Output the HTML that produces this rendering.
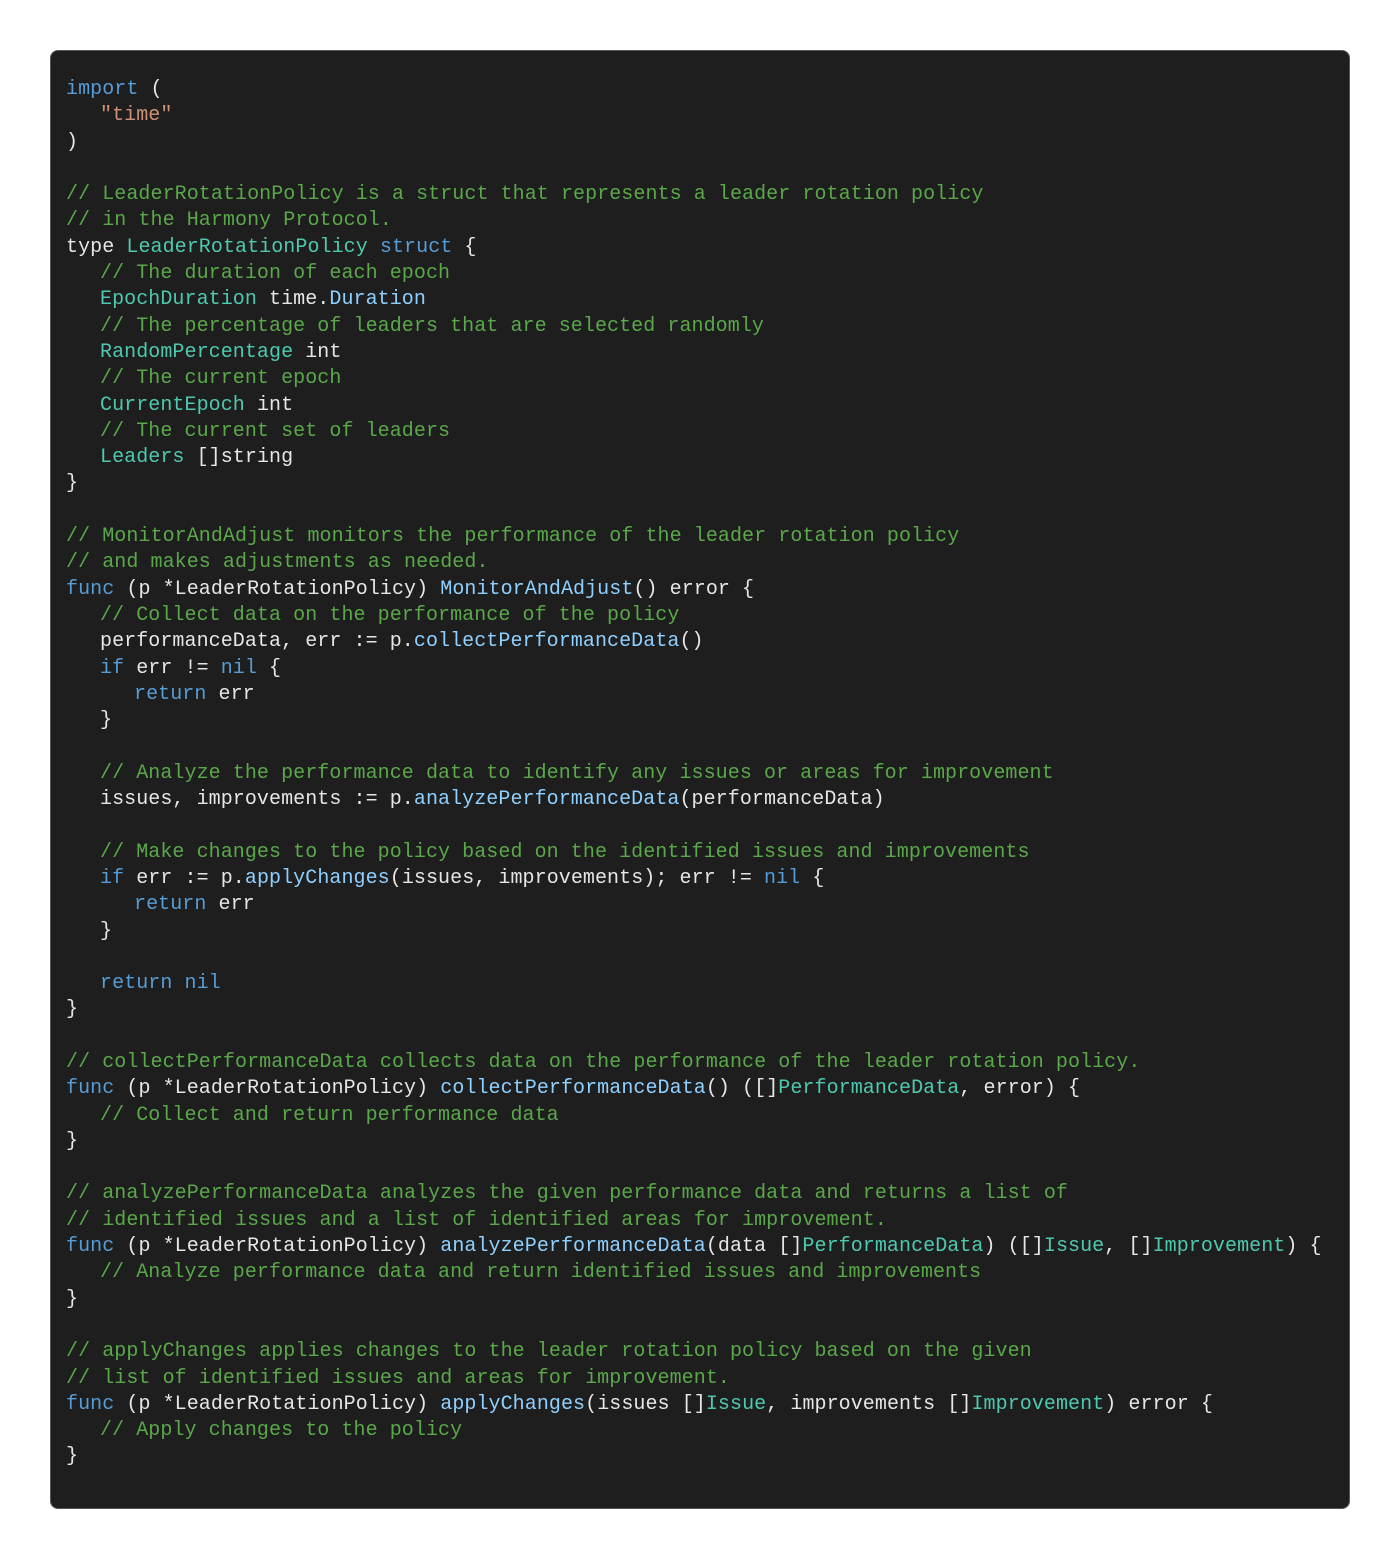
<!DOCTYPE html>
<html><head><meta charset="utf-8"><style>
html,body{margin:0;padding:0;background:#fff;width:1400px;height:1560px;overflow:hidden}
.box{position:absolute;left:50px;top:50px;width:1300px;height:1459px;background:#1e1e1e;border:1px solid #555;border-radius:8px;box-sizing:border-box}
pre{margin:0;position:absolute;left:15px;top:26px;font-family:"Liberation Mono",monospace;font-size:20px;letter-spacing:0.07px;line-height:26.3px;color:#e6e6e6;white-space:pre}
.k{color:#569cd6}.s{color:#ce9178}.c{color:#5aa84a}.t{color:#4ec9b0}.f{color:#8fd0ff}
.i{display:inline-block;width:34px}
</style></head><body><div class="box"><pre><span class="k">import</span> (
<span class="i"></span><span class="s">"time"</span>
)

<span class="c">// LeaderRotationPolicy is a struct that represents a leader rotation policy</span>
<span class="c">// in the Harmony Protocol.</span>
type <span class="t">LeaderRotationPolicy</span> <span class="k">struct</span> {
<span class="i"></span><span class="c">// The duration of each epoch</span>
<span class="i"></span><span class="t">EpochDuration</span> time.<span class="f">Duration</span>
<span class="i"></span><span class="c">// The percentage of leaders that are selected randomly</span>
<span class="i"></span><span class="t">RandomPercentage</span> int
<span class="i"></span><span class="c">// The current epoch</span>
<span class="i"></span><span class="t">CurrentEpoch</span> int
<span class="i"></span><span class="c">// The current set of leaders</span>
<span class="i"></span><span class="t">Leaders</span> []string
}

<span class="c">// MonitorAndAdjust monitors the performance of the leader rotation policy</span>
<span class="c">// and makes adjustments as needed.</span>
<span class="k">func</span> (p *LeaderRotationPolicy) <span class="f">MonitorAndAdjust</span>() error {
<span class="i"></span><span class="c">// Collect data on the performance of the policy</span>
<span class="i"></span>performanceData, err := p.<span class="f">collectPerformanceData</span>()
<span class="i"></span><span class="k">if</span> err != <span class="k">nil</span> {
<span class="i"></span><span class="i"></span><span class="k">return</span> err
<span class="i"></span>}

<span class="i"></span><span class="c">// Analyze the performance data to identify any issues or areas for improvement</span>
<span class="i"></span>issues, improvements := p.<span class="f">analyzePerformanceData</span>(performanceData)

<span class="i"></span><span class="c">// Make changes to the policy based on the identified issues and improvements</span>
<span class="i"></span><span class="k">if</span> err := p.<span class="f">applyChanges</span>(issues, improvements); err != <span class="k">nil</span> {
<span class="i"></span><span class="i"></span><span class="k">return</span> err
<span class="i"></span>}

<span class="i"></span><span class="k">return nil</span>
}

<span class="c">// collectPerformanceData collects data on the performance of the leader rotation policy.</span>
<span class="k">func</span> (p *LeaderRotationPolicy) <span class="f">collectPerformanceData</span>() ([]<span class="t">PerformanceData</span>, error) {
<span class="i"></span><span class="c">// Collect and return performance data</span>
}

<span class="c">// analyzePerformanceData analyzes the given performance data and returns a list of</span>
<span class="c">// identified issues and a list of identified areas for improvement.</span>
<span class="k">func</span> (p *LeaderRotationPolicy) <span class="f">analyzePerformanceData</span>(data []<span class="t">PerformanceData</span>) ([]<span class="t">Issue</span>, []<span class="t">Improvement</span>) {
<span class="i"></span><span class="c">// Analyze performance data and return identified issues and improvements</span>
}

<span class="c">// applyChanges applies changes to the leader rotation policy based on the given</span>
<span class="c">// list of identified issues and areas for improvement.</span>
<span class="k">func</span> (p *LeaderRotationPolicy) <span class="f">applyChanges</span>(issues []<span class="t">Issue</span>, improvements []<span class="t">Improvement</span>) error {
<span class="i"></span><span class="c">// Apply changes to the policy</span>
}</pre></div></body></html>
